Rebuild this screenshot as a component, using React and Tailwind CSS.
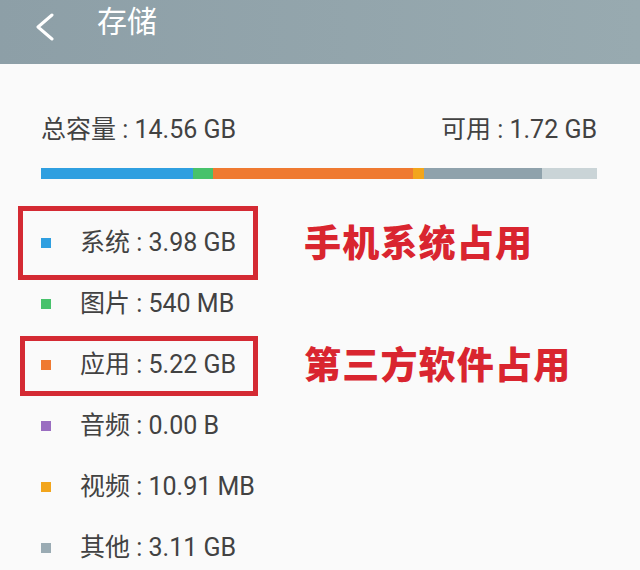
const font = { fontFamily: '"Roboto", "Noto Sans CJK SC", sans-serif' };

const items = [
  { name: '系统', value: '3.98 GB', color: 'bg-[#2f9fe0]', mark: 'big', note: '手机系统占用' },
  { name: '图片', value: '540 MB', color: 'bg-[#47c26b]' },
  { name: '应用', value: '5.22 GB', color: 'bg-[#ef7a31]', mark: 'small', note: '第三方软件占用' },
  { name: '音频', value: '0.00 B', color: 'bg-[#9a6dc1]' },
  { name: '视频', value: '10.91 MB', color: 'bg-[#f2a51c]' },
  { name: '其他', value: '3.11 GB', color: 'bg-[#9aabb3]' },
];

function Row({ item }) {
  return (
    <div className="relative flex items-center h-[61px]">
      {item.mark === 'big' && (
        <div className="absolute left-[-23px] top-[-6px] w-[240px] h-[74px] border-[5px] border-[#d42a33]" />
      )}
      {item.mark === 'small' && (
        <div className="absolute left-[-21px] top-[2px] w-[238px] h-[60px] border-[5px] border-[#d42a33]" />
      )}
      <div className={`w-[10px] h-[10px] shrink-0 ${item.color}`} />
      <div className="ml-[29px] w-[224px] shrink-0 text-[25px] leading-none text-[#424242]">
        {item.name} : {item.value}
      </div>
      {item.note && (
        <div className="mt-[3px] text-[37px] leading-none font-black text-[#d9252f] tracking-[1.2px]">
          {item.note}
        </div>
      )}
    </div>
  );
}

export default function App() {
  return (
    <div className="w-[640px] h-[570px] overflow-hidden bg-[#fafafa]" style={font}>
      {/* 顶部栏 */}
      <div className="h-[64px] bg-gradient-to-r from-[#8d9fa7] to-[#98aab0] flex items-start pt-[7px]">
        <svg width="22" height="28" viewBox="0 0 22 28" className="ml-[33px] mt-[6px]">
          <polyline points="19,2 5,14 19,26" fill="none" stroke="#fff" strokeWidth="3" strokeLinecap="round" strokeLinejoin="round" />
        </svg>
        <div className="ml-[42px] text-[30px] leading-none text-white">存储</div>
      </div>

      <div className="pl-[41px] pr-[43px]">
        <div className="mt-[50px] h-[30px] flex items-center justify-between text-[25px] leading-none text-[#424242]">
          <span>总容量 : 14.56 GB</span>
          <span>可用 : 1.72 GB</span>
        </div>

        {/* 容量条 */}
        <div className="mt-[24px] h-[11px] flex">
          <div className="w-[152px] bg-[#2f9fe0]" />
          <div className="w-[20px] bg-[#47c26b]" />
          <div className="w-[200px] bg-[#ef7a31]" />
          <div className="w-[11px] bg-[#f2a51c]" />
          <div className="w-[118px] bg-[#8fa2ac]" />
          <div className="flex-1 bg-[#cad4d7]" />
        </div>

        <div className="mt-[33px]">
          {items.map(item => (
            <Row key={item.name} item={item} />
          ))}
        </div>
      </div>
    </div>
  );
}
